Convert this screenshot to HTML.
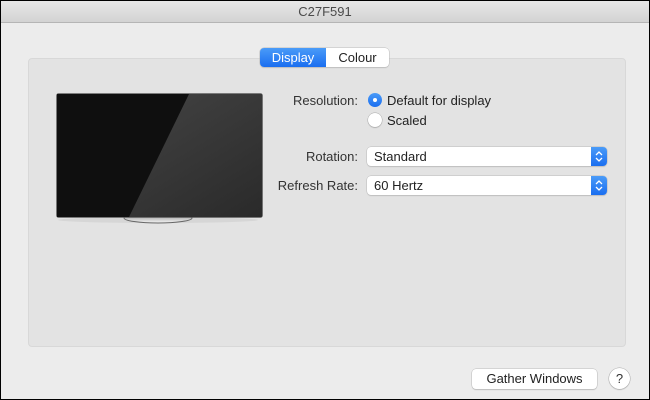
<!DOCTYPE html>
<html><head><style>
body{margin:0;width:650px;height:400px;background:#000;font-family:"Liberation Sans",sans-serif;font-size:13px;color:#222;overflow:hidden;position:relative}
.win{position:absolute;left:1px;top:1px;width:648px;height:398px;background:#ececec;overflow:hidden}
.title{position:absolute;left:0;top:0;width:648px;height:21px;background:linear-gradient(#e8e8e8,#d3d3d3);border-bottom:1px solid #b5b5b5;text-align:center;line-height:21px;color:#4a4a4a;font-size:13px}
.panel{position:absolute;left:27px;top:57px;width:596px;height:287px;background:#e3e3e3;border:1px solid #d8d8d8;border-radius:4px}
.tabs{position:absolute;left:259px;top:47px;height:19px;width:129px;border-radius:4px;box-shadow:0 0 0 .5px #bbb,0 1px 1px rgba(0,0,0,.15);background:#fff;display:flex;font-size:13px;line-height:19px}
.tabs div{text-align:center}
.t1{width:66px;background:linear-gradient(#4a9bf8,#1a6ef0);color:#fff;border-radius:4px 0 0 4px}
.t2{width:63px;color:#222}
.lbl{position:absolute;text-align:right;width:120px;color:#333}
.radio{position:absolute;width:14px;height:14px;border-radius:50%;box-sizing:border-box}
.pop{position:absolute;left:366px;width:240px;height:19px;background:#fff;border-radius:4px;box-shadow:0 0 0 .5px #bbb,0 1px 1px rgba(0,0,0,.15);line-height:19px;padding-left:7px;box-sizing:border-box;color:#222}
.arr{position:absolute;right:0;top:0;width:16px;height:19px;background:linear-gradient(#4a9bf8,#1a6ef0);border-radius:0 4px 4px 0}
.btn{position:absolute;left:471px;top:368px;width:125px;height:20px;background:#fff;border-radius:4px;box-shadow:0 0 0 .5px #bbb,0 1px 1px rgba(0,0,0,.2);text-align:center;line-height:20px;color:#222}
.help{position:absolute;left:608px;top:367px;width:21px;height:21px;border-radius:50%;background:#fff;box-shadow:0 0 0 .5px #aaa,0 1px 1px rgba(0,0,0,.2);text-align:center;line-height:21px;color:#333}
</style></head><body>
<div class="win">
<div class="title">C27F591</div>
<div class="panel"></div>
<div class="tabs"><div class="t1">Display</div><div class="t2">Colour</div></div>
<svg style="position:absolute;left:50px;top:88px" width="220" height="140">
<defs><linearGradient id="g" x1="0" y1="0" x2="1" y2="1"><stop offset="0" stop-color="#484848"/><stop offset="1" stop-color="#2a2a2a"/></linearGradient>
<linearGradient id="s" x1="0" y1="0" x2="0" y2="1"><stop offset="0" stop-color="#888"/><stop offset="1" stop-color="#f4f4f4"/></linearGradient></defs>
<ellipse cx="107" cy="131" rx="100" ry="3" fill="#d6d6d6"/>
<ellipse cx="107" cy="129" rx="34" ry="5" fill="url(#s)" stroke="#666" stroke-width="1"/>
<rect x="5.5" y="4.5" width="206" height="124" rx="2" fill="url(#g)" stroke="#666" stroke-width=".6"/>
<path d="M6 5 H138 L78 128 H6 Z" fill="#0f0f0f"/>
</svg>
<div class="lbl" style="left:237px;top:92px">Resolution:</div>
<div class="radio" style="left:367px;top:92px;background:linear-gradient(#4a9bf8,#1a6ef0)"><div style="position:absolute;left:5px;top:5px;width:4px;height:4px;border-radius:50%;background:#fff"></div></div>
<div style="position:absolute;left:386px;top:92px">Default for display</div>
<div class="radio" style="left:367px;top:112px;background:#fff;box-shadow:0 0 0 .5px #aaa,0 1px 1px rgba(0,0,0,.2)"></div>
<div style="position:absolute;left:386px;top:112px">Scaled</div>
<div class="lbl" style="left:237px;top:148px">Rotation:</div>
<div class="pop" style="top:146px">Standard<div class="arr"><svg width="16" height="19"><path d="M5 8 L8 5 L11 8 M5 11 L8 14 L11 11" fill="none" stroke="#fff" stroke-width="1.3"/></svg></div></div>
<div class="lbl" style="left:237px;top:177px">Refresh Rate:</div>
<div class="pop" style="top:175px">60 Hertz<div class="arr"><svg width="16" height="19"><path d="M5 8 L8 5 L11 8 M5 11 L8 14 L11 11" fill="none" stroke="#fff" stroke-width="1.3"/></svg></div></div>
<div class="btn">Gather Windows</div>
<div class="help">?</div>
</div>
</body></html>
